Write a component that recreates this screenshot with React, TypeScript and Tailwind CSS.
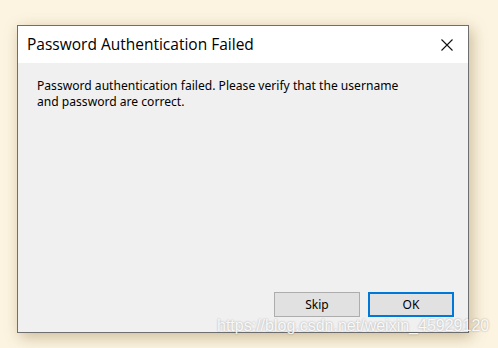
import React from "react";

export default function App() {
  return (
    <div className="relative w-[498px] h-[348px] overflow-hidden bg-[#fcf4e1] pt-[25px] pl-[17px]">
      <div className="w-[452px] h-[308px] border border-[#6e6e6e] bg-[#f0f0f0] flex flex-col shadow-[3px_4px_14px_rgba(110,80,20,0.35)]">
        <div className="h-[37px] bg-white flex items-center justify-between pl-[9px] pr-[15px]">
          <span className="text-[15.5px] text-black" style={{ fontFamily: '"Open Sans", "Noto Sans", sans-serif' }}>
            Password Authentication Failed
          </span>
          <svg width="12" height="12" viewBox="0 0 12 12">
            <path d="M0.5 0.5 L11.5 11.5 M11.5 0.5 L0.5 11.5" stroke="#111" strokeWidth="1.1" />
          </svg>
        </div>
        <div className="flex-1 flex flex-col justify-between pl-[19px] pr-[14px] pt-[15px] pb-[15px]">
          <p className="text-[12.1px] leading-[16px] text-black w-[370px]" style={{ fontFamily: '"Noto Sans", "Open Sans", sans-serif' }}>
            Password authentication failed. Please verify that the username and password are correct.
          </p>
          <div className="flex justify-end gap-[8px]">
            <button className="w-[86px] h-[25px] bg-[#e1e1e1] border border-[#adadad] text-[12px] text-black" style={{ fontFamily: '"Noto Sans", sans-serif' }}>
              Skip
            </button>
            <button className="w-[86px] h-[25px] bg-[#e1e1e1] border-2 border-[#0078d7] text-[12px] text-black" style={{ fontFamily: '"Noto Sans", sans-serif' }}>
              OK
            </button>
          </div>
        </div>
      </div>
      <div
        className="absolute left-[217px] top-[317px] text-[16px] leading-[18px] text-white/90 [text-shadow:0_0_2px_rgba(0,0,0,0.35)]"
        style={{ fontFamily: '"Liberation Sans", Arial, sans-serif' }}
      >
        https://blog.csdn.net/weixin_45929120
      </div>
    </div>
  );
}
